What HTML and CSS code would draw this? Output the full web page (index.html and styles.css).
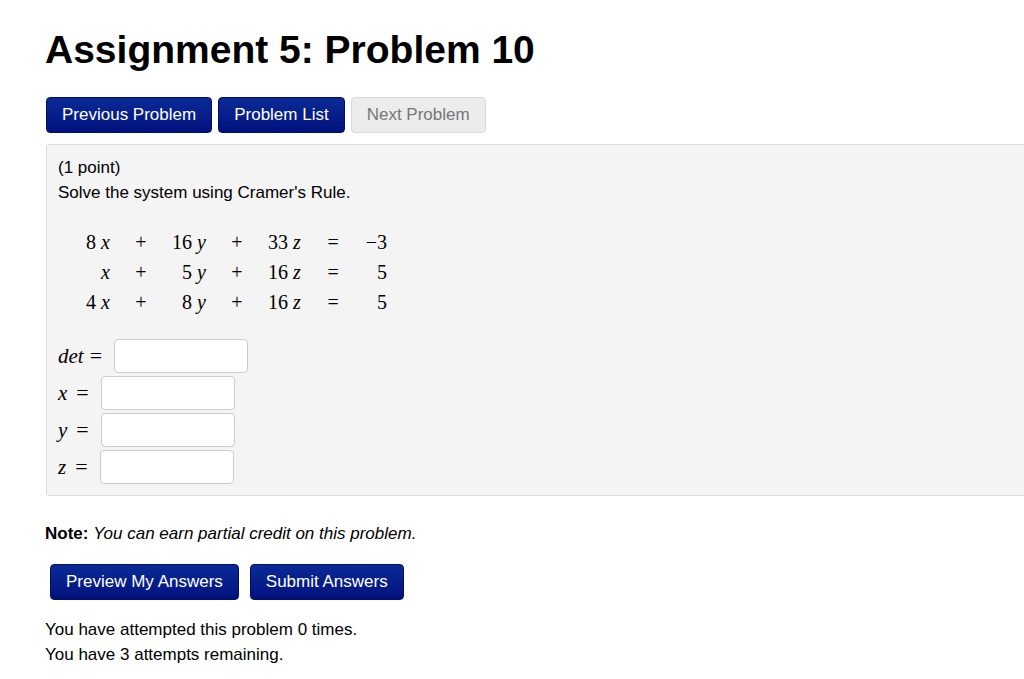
FILE: index.html
```html
<!DOCTYPE html>
<html lang="en">

<head>
  <meta charset="UTF-8">
  <title>Assignment 5: Problem 10</title>
  <link rel="stylesheet" href="styles.css">
</head>

<body>
  <h1>Assignment 5: Problem 10</h1>
  <div class="nav">
    <button class="btn">Previous Problem</button>
    <button class="btn">Problem List</button>
    <button class="btn disabled">Next Problem</button>
  </div>

  <div class="problem">
    <div class="intro">(1 point)<br>Solve the system using Cramer's Rule.</div>
    <table class="system">
      <tr>
        <td class="term">8 <i>x</i></td><td class="op">+</td>
        <td class="term">16 <i>y</i></td><td class="op">+</td>
        <td class="term">33 <i>z</i></td><td class="op eq">=</td>
        <td class="term">&minus;3</td>
      </tr>
      <tr>
        <td class="term"><i>x</i></td><td class="op">+</td>
        <td class="term">5 <i>y</i></td><td class="op">+</td>
        <td class="term">16 <i>z</i></td><td class="op eq">=</td>
        <td class="term">5</td>
      </tr>
      <tr>
        <td class="term">4 <i>x</i></td><td class="op">+</td>
        <td class="term">8 <i>y</i></td><td class="op">+</td>
        <td class="term">16 <i>z</i></td><td class="op eq">=</td>
        <td class="term">5</td>
      </tr>
    </table>
    <div class="answers">
      <div class="answer"><span class="label"><i>det</i><span class="eq">=</span></span><input type="text"></div>
      <div class="answer"><span class="label"><i class="var">x</i><span class="eq">=</span></span><input type="text"></div>
      <div class="answer"><span class="label"><i class="var">y</i><span class="eq">=</span></span><input type="text"></div>
      <div class="answer"><span class="label"><i class="var">z</i><span class="eq">=</span></span><input type="text"></div>
    </div>
  </div>

  <p class="note"><b>Note:</b> <i>You can earn partial credit on this problem.</i></p>

  <div class="submit">
    <button class="btn">Preview My Answers</button>
    <button class="btn">Submit Answers</button>
  </div>

  <p class="attempts">You have attempted this problem 0 times.<br>You have 3 attempts remaining.</p>
</body>

</html>
```

FILE: styles.css
```css
body {
  margin: 0;
  padding: 0 0 0 45px;
  font-family: 'Liberation Sans', Arial, sans-serif;
  font-size: 17px;
  color: #000;
  background: #fff;
  overflow: hidden;
}

h1 {
  font-size: 39px;
  font-weight: bold;
  margin: 28px 0 25px;
  line-height: 44px;
}

.btn {
  font-family: inherit;
  font-size: 17px;
  height: 36px;
  padding: 0 15px;
  color: #fff;
  background: linear-gradient(#0a2a96, #02127e);
  border: 1px solid #021060;
  border-radius: 4px;
}

.btn.disabled {
  color: #777;
  background: #ececec;
  border-color: #d8d8d8;
}

.nav {
  display: flex;
  gap: 6px;
  margin-left: 1px;
}

.problem {
  margin: 11px -10px 0 1px;
  padding: 10px 11px 11px;
  background: #f4f4f4;
  border: 1px solid #dcdcdc;
  border-radius: 3px;
}

.intro {
  line-height: 25px;
}

/* linear system, columns right-aligned like an eqnarray */
.system {
  margin: 22px 0 22px 25px;
  border-collapse: collapse;
  font-family: 'Liberation Serif', 'Times New Roman', serif;
  font-size: 20px;
  white-space: nowrap;
}

.system td {
  height: 30px;
  padding: 0;
  text-align: right;
}

.system td:first-child {
  width: 27px;
}

.system .op {
  text-align: center;
  width: 62px;
}

.system .op.eq {
  width: 65px;
}

.answers {
  display: flex;
  flex-direction: column;
  gap: 3px;
}

.answer {
  display: flex;
  align-items: center;
}

.label {
  font-family: 'Liberation Serif', 'Times New Roman', serif;
  font-size: 21px;
  margin-right: 12px;
  white-space: nowrap;
}

.label .eq {
  margin-left: 6px;
  font-size: 22px;
}

.label .var {
  margin-right: 3px;
}

.answer input {
  width: 134px;
  height: 34px;
  box-sizing: border-box;
  border: 1px solid #ccc;
  border-radius: 4px;
  background: #fff;
}

.note {
  margin: 28px 0 20px;
  line-height: 20px;
}

.submit {
  display: flex;
  gap: 11px;
  margin-left: 5px;
}

.attempts {
  margin: 17px 0 0;
  line-height: 25px;
}
```
